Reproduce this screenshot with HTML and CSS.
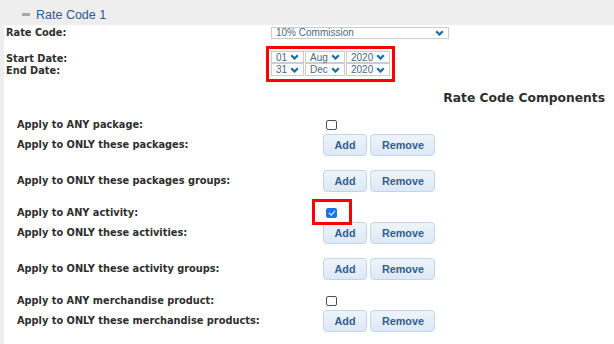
FILE: index.html
```html
<!DOCTYPE html>
<html lang="en">
<head>
<meta charset="utf-8">
<title>Rate Code 1</title>
<link rel="stylesheet" href="styles.css">
</head>
<body>
<div class="header">
  <span class="minus"></span>
  <span class="title">Rate Code 1</span>
</div>
<div class="panel">
  <div class="top-form">
    <div class="lbl rate-lbl">Rate Code:</div>
    <div class="rate-ctrl">
      <div class="select wide"><span>10% Commission</span><svg class="chev" viewBox="0 0 9 6" width="9" height="6"><path d="M1.2 1.2 L4.5 4.5 L7.8 1.2" fill="none" stroke="#1b6ea6" stroke-width="2.3"/></svg></div>
    </div>
    <div class="date-labels">
      <div class="lbl date-lbl">Start Date:</div>
      <div class="lbl date-lbl">End Date:</div>
    </div>
    <div class="date-ctrl">
      <div class="date-grid marked">
        <div class="select d1"><span>01</span><svg class="chev" viewBox="0 0 9 6" width="9" height="6"><path d="M1.2 1.2 L4.5 4.5 L7.8 1.2" fill="none" stroke="#1b6ea6" stroke-width="2.3"/></svg></div>
        <div class="select d2"><span>Aug</span><svg class="chev" viewBox="0 0 9 6" width="9" height="6"><path d="M1.2 1.2 L4.5 4.5 L7.8 1.2" fill="none" stroke="#1b6ea6" stroke-width="2.3"/></svg></div>
        <div class="select d3"><span>2020</span><svg class="chev" viewBox="0 0 9 6" width="9" height="6"><path d="M1.2 1.2 L4.5 4.5 L7.8 1.2" fill="none" stroke="#1b6ea6" stroke-width="2.3"/></svg></div>
        <div class="select d1"><span>31</span><svg class="chev" viewBox="0 0 9 6" width="9" height="6"><path d="M1.2 1.2 L4.5 4.5 L7.8 1.2" fill="none" stroke="#1b6ea6" stroke-width="2.3"/></svg></div>
        <div class="select d2"><span>Dec</span><svg class="chev" viewBox="0 0 9 6" width="9" height="6"><path d="M1.2 1.2 L4.5 4.5 L7.8 1.2" fill="none" stroke="#1b6ea6" stroke-width="2.3"/></svg></div>
        <div class="select d3"><span>2020</span><svg class="chev" viewBox="0 0 9 6" width="9" height="6"><path d="M1.2 1.2 L4.5 4.5 L7.8 1.2" fill="none" stroke="#1b6ea6" stroke-width="2.3"/></svg></div>
      </div>
    </div>
  </div>

  <h2 class="section-title">Rate Code Components</h2>

  <div class="components">
    <div class="row check-row">
      <div class="lbl">Apply to ANY package:</div>
      <div class="ctrl"><input type="checkbox" class="cb"></div>
    </div>
    <div class="row btn-row spaced">
      <div class="lbl">Apply to ONLY these packages:</div>
      <div class="ctrl"><button class="btn add">Add</button><button class="btn">Remove</button></div>
    </div>
    <div class="row btn-row spaced">
      <div class="lbl">Apply to ONLY these packages groups:</div>
      <div class="ctrl"><button class="btn add">Add</button><button class="btn">Remove</button></div>
    </div>
    <div class="row check-row">
      <div class="lbl">Apply to ANY activity:</div>
      <div class="ctrl"><span class="cb-wrap marked-cb"><input type="checkbox" class="cb" checked></span></div>
    </div>
    <div class="row btn-row spaced">
      <div class="lbl">Apply to ONLY these activities:</div>
      <div class="ctrl"><button class="btn add">Add</button><button class="btn">Remove</button></div>
    </div>
    <div class="row btn-row spaced">
      <div class="lbl">Apply to ONLY these activity groups:</div>
      <div class="ctrl"><button class="btn add">Add</button><button class="btn">Remove</button></div>
    </div>
    <div class="row check-row">
      <div class="lbl">Apply to ANY merchandise product:</div>
      <div class="ctrl"><input type="checkbox" class="cb"></div>
    </div>
    <div class="row btn-row">
      <div class="lbl">Apply to ONLY these merchandise products:</div>
      <div class="ctrl"><button class="btn add">Add</button><button class="btn">Remove</button></div>
    </div>
  </div>
</div>
</body>
</html>
```

FILE: styles.css
```css
* { box-sizing: border-box; }

html, body {
  margin: 0;
  padding: 0;
  background: #eeeeee;
  height: 100%;
  overflow: hidden;
}

body {
  font-family: "DejaVu Sans", Verdana, sans-serif;
  color: #333333;
}

.header {
  height: 25px;
  padding: 4px 0 0 22px;
  display: flex;
  align-items: center;
}

.minus {
  width: 8px;
  height: 3px;
  background: #a6a6a6;
  margin-right: 6px;
}

.title {
  font-family: "Liberation Sans", Arial, sans-serif;
  font-size: 12.5px;
  color: #2a5b9a;
}

.panel {
  margin-left: 4px;
  background: #ffffff;
  min-height: calc(100vh - 25px);
}

.lbl {
  font-weight: bold;
  font-size: 9.8px;
  color: #2e2e2e;
  white-space: nowrap;
}

/* top form */
.top-form {
  display: grid;
  grid-template-columns: 265px auto;
  padding-left: 2px;
}

.rate-lbl,
.rate-ctrl {
  height: 15px;
  display: flex;
  align-items: center;
}

.date-labels,
.date-ctrl {
  margin-top: 10.7px;
}

.date-lbl {
  height: 12.7px;
  display: flex;
  align-items: center;
  padding-top: 2px;
}

.select {
  display: flex;
  align-items: center;
  justify-content: space-between;
  height: 12.7px;
  border: 1px solid #cccccc;
  background: #ffffff;
  padding: 0 4px 0 4px;
  font-family: "Liberation Sans", Arial, sans-serif;
  font-size: 10px;
  line-height: 11px;
  color: #4a6786;
}

.select.wide {
  width: 178px;
  height: 12px;
  padding-right: 4px;
}

.chev { display: block; flex: none; }

.date-grid {
  display: grid;
  grid-template-columns: 33px 40px 43.5px;
  column-gap: 1px;
  width: max-content;
  position: relative;
}

/* red annotation boxes (overlays) */
.marked::after {
  content: "";
  position: absolute;
  left: -5px;
  right: -5px;
  top: -5px;
  bottom: -6px;
  border: 3px solid #ff0000;
  pointer-events: none;
}

.section-title {
  margin: 13.8px 9px 0 0;
  font-size: 12.3px;
  line-height: 16px;
  font-weight: bold;
  text-align: right;
  color: #2e2e2e;
}

/* components */
.components {
  padding-left: 13px;
  margin-top: 11px;
}

.row {
  display: grid;
  grid-template-columns: 306px auto;
  align-items: center;
}

.check-row { height: 16px; }
.btn-row { height: 24px; }
.spaced { margin-bottom: 12px; }

.ctrl {
  display: flex;
  align-items: center;
}

.cb {
  appearance: none;
  -webkit-appearance: none;
  width: 10.5px;
  height: 10.5px;
  margin: 0 0 0 3px;
  border: 1px solid #4f4f4f;
  border-radius: 2px;
  background: #ffffff;
  position: relative;
  display: block;
}

.cb:checked {
  background: #1a73e8;
  border-color: #1a73e8;
}

.cb:checked::after {
  content: "";
  position: absolute;
  left: 2.6px;
  top: 0.6px;
  width: 2.6px;
  height: 5px;
  border: solid #ffffff;
  border-width: 0 1.6px 1.6px 0;
  transform: rotate(40deg);
}

.cb-wrap {
  position: relative;
  display: block;
}

.marked-cb::after {
  content: "";
  position: absolute;
  left: -11.3px;
  right: -15px;
  top: -9px;
  bottom: -6.7px;
  border: 3px solid #ff0000;
  pointer-events: none;
}

.btn {
  height: 22px;
  padding: 0 10.5px;
  border: 1px solid #c2d6eb;
  border-radius: 4px;
  background: linear-gradient(#edf4fb, #dde9f6);
  font-family: "Liberation Sans", Arial, sans-serif;
  font-weight: bold;
  font-size: 10.8px;
  color: #305e8f;
  margin: 0 0 0 3.4px;
  line-height: 20px;
}

.btn.add { margin-left: 0; }
```
